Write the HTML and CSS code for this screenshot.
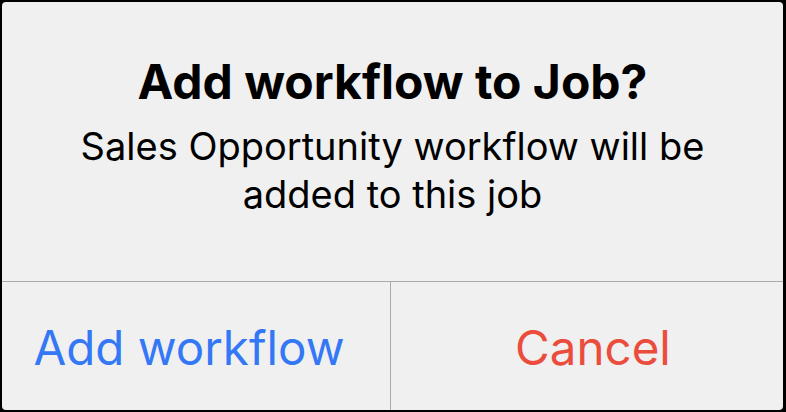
FILE: index.html
```html
<!DOCTYPE html>
<html lang="en">
<head>
  <meta charset="UTF-8">
  <meta name="viewport" content="width=device-width, initial-scale=1.0">
  <title>Add workflow</title>
  <link rel="stylesheet" href="styles.css">
</head>
<body>
  <div class="alert">
    <div class="alert-body">
      <h1 class="alert-title">Add workflow to Job?</h1>
      <p class="alert-message">Sales Opportunity workflow will be<br>added to this job</p>
    </div>
    <div class="alert-actions">
      <button class="action action-primary">Add workflow</button>
      <button class="action action-cancel">Cancel</button>
    </div>
  </div>
</body>
</html>
```

FILE: styles.css
```css
html, body {
  margin: 0;
  height: 100%;
}
body {
  background-color: #000;
  font-family: Inter, "Noto Sans", sans-serif;
  padding: 2px 3px 2px 2px;
  box-sizing: border-box;
}
.alert {
  height: 100%;
  background-color: #f0f0f0;
  border-radius: 4px;
  display: flex;
  flex-direction: column;
}
.alert-body {
  height: 280px;
  box-sizing: border-box;
  padding-top: 52px;
  text-align: center;
  border-bottom: 1px solid #ababab;
}
.alert-title {
  margin: 0;
  font-size: 48px;
  font-weight: 700;
  color: #000;
  line-height: 56px;
}
.alert-message {
  margin: 12px 0 0;
  font-size: 38px;
  line-height: 48px;
  color: #000;
}
.alert-actions {
  flex: 1;
  display: grid;
  grid-template-columns: 389px 1fr;
}
.action {
  background: none;
  border: none;
  font-family: inherit;
  font-size: 47.5px;
  cursor: pointer;
  padding: 2px 0 0;
}
.action-primary {
  color: #3478f6;
  border-right: 1px solid #ababab;
  padding-right: 14px;
}
.action-cancel {
  color: #eb4d3d;
  padding-left: 12px;
}
```
